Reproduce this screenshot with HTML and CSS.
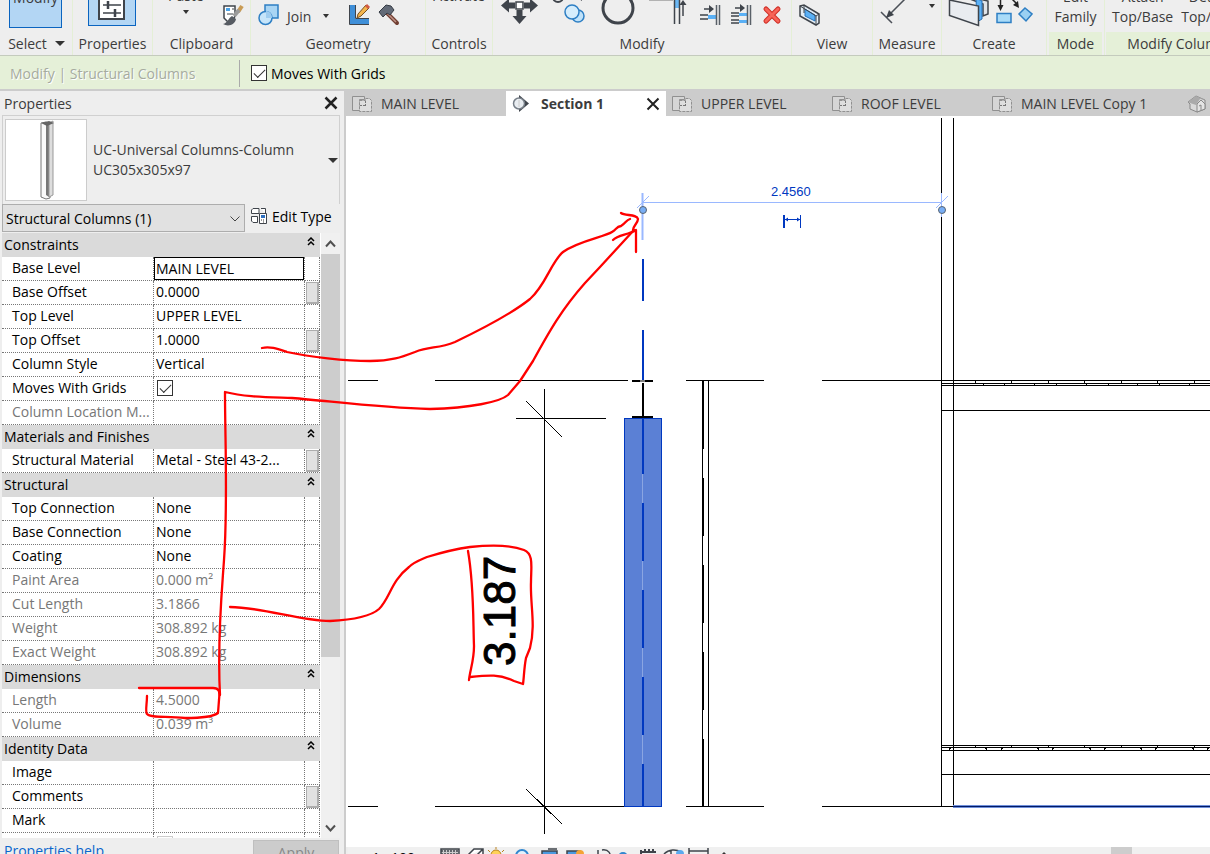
FILE: index.html
```html
<!DOCTYPE html>
<html lang="en">
<head>
<meta charset="utf-8">
<title>Section 1</title>
<link rel="stylesheet" href="styles.css">
</head>
<body>
<div class="app">
  <div class="ribbon">
    <section class="panel panel-select">
      <div class="panel-body"><button class="tool tool-on tool-modify">Modify</button></div>
      <h2 class="panel-title">Select <span class="caret"></span></h2>
    </section>
    <section class="panel panel-properties">
      <div class="panel-body"><button class="tool tool-on tool-props" aria-label="Properties">
        <svg width="30" height="30" viewBox="0 0 30 30"><path d="M2-10h25v34H2z" fill="#fff" stroke="#3f444b" stroke-width="2"/><path d="M7-8h7v12H7z" fill="#4a9ae0" stroke="#444"/><path d="M17-1h6M17 3h6M6 10h18M6 18h18" stroke="#3f444b" stroke-width="1.500"/><path d="M11 6v8M18 14v8" stroke="#3f444b" stroke-width="2.500"/></svg></button></div>
      <h2 class="panel-title">Properties</h2>
    </section>
    <section class="panel panel-clipboard">
      <div class="panel-body">
        <button class="tool tool-text tool-paste">Paste<span class="caret caret-small"></span></button>
        <button class="tool" aria-label="Match type"><svg width="24" height="32" viewBox="220 0 24 32"><path d="M223 6h11v10l-3 6h-4l-4-4z" fill="#fff" stroke="#3f444b" stroke-width="1.500"/><path d="M225 8h4v3h-4z" fill="#4aa3e8"/><path d="M226 14h6M231 9h2" stroke="#3f444b"/><path d="M241 6l-4 6" stroke="#c99b55" stroke-width="4"/><path d="M238 10l-5 6" stroke="#9b9b9b" stroke-width="4"/><path d="M222 24c5-1 5-6 9-8l4 3c-1 6-8 8-13 5z" fill="#565b62"/></svg></button>
      </div>
      <h2 class="panel-title">Clipboard</h2>
    </section>
    <section class="panel panel-geometry">
      <div class="panel-body">
        <button class="tool tool-join"><svg width="24" height="32" viewBox="257 0 24 32"><path d="M265 5h13v13h-13z" fill="#a9d5f4" stroke="#2e7fc4" stroke-width="1.500"/><circle cx="265.500" cy="18" r="6.500" fill="#c6e5fa" stroke="#2e7fc4" stroke-width="1.500"/><path d="M266 11v7h6c0-4-2-7-6-7z" fill="#9fcdf0"/></svg><span>Join</span><span class="caret caret-small"></span></button>
        <button class="tool" aria-label="Wall joins"><svg width="26" height="32" viewBox="345 0 26 32"><path d="M351.500 5v16.500H368" fill="none" stroke="#3f8fd8" stroke-width="5"/><path d="M348.500 5v19.500H368M354.500 5v13.500H368" fill="none" stroke="#3f444b"/><path d="M356 18l1-4 8-9 3 3-8 8z" fill="#f4b54c" stroke="#785020"/><path d="M365 5l3 3" stroke="#d05b45" stroke-width="3"/></svg></button>
        <button class="tool" aria-label="Demolish"><svg width="26" height="32" viewBox="376 0 26 32"><path d="M387 13l10 10" stroke="#713f32" stroke-width="4" stroke-linecap="round"/><path d="M387 13l9 9" stroke="#c09186" stroke-width="1.500"/><path d="M379 12l7-7 5 1 3 4-4 5-3-2-4 4z" fill="#626a77" stroke="#343a43"/></svg></button>
      </div>
      <h2 class="panel-title">Geometry</h2>
    </section>
    <section class="panel panel-controls">
      <div class="panel-body"><button class="tool tool-text tool-activate">Activate</button></div>
      <h2 class="panel-title">Controls</h2>
    </section>
    <section class="panel panel-modify">
      <div class="panel-body">
        <button class="tool" aria-label="Move"><svg width="42" height="32" viewBox="498 0 42 32"><g fill="#3f444b"><path d="M501 5.500l8-7v4h6v6h-6v4zM538 5.500l-8-7v4h-6v6h6v4zM519.500 24l-7-8h4v-6h6v6h4z"/></g><path d="M516 2h7v7h-7z" fill="#fff" stroke="#3f444b" stroke-width="1.500"/></svg></button>
        <button class="tool" aria-label="Copy"><svg width="42" height="32" viewBox="547 0 42 32"><circle cx="558" cy="-3" r="5" fill="none" stroke="#3f444b" stroke-width="2"/><path d="M576-3l6 0v4z" fill="#3f444b"/><circle cx="578" cy="16" r="6" fill="#bfe2fa" stroke="#2e7fc4" stroke-width="1.500"/><circle cx="572" cy="12" r="7" fill="#d5edfc" stroke="#2e7fc4" stroke-width="1.500"/></svg></button>
        <button class="tool" aria-label="Rotate"><svg width="43" height="32" viewBox="596 0 43 32"><circle cx="618" cy="8" r="15" fill="none" stroke="#3f444b" stroke-width="3"/></svg></button>
        <button class="tool" aria-label="Trim"><svg width="44" height="32" viewBox="646 0 44 32"><path d="M649 0h24" stroke="#777" stroke-width="1"/><path d="M674 0h5v8h-5z" fill="#6bb8f5"/><path d="M674.500 0v24M679.500 0v24" stroke="#3f444b" stroke-width="1.500"/><path d="M683 16V4" stroke="#3f444b" stroke-width="1.500"/><path d="M679.500 5l3.500-5 3.500 5z" fill="#3f444b"/></svg></button>
        <button class="tool" aria-label="Align"><svg width="25" height="32" viewBox="697 0 25 32"><path d="M704 9h9M700 15h8M700 19h8" stroke="#3f444b" stroke-width="1.500"/><path d="M709 5l5 4-5 4z" fill="#3f444b"/><path d="M708 15h8v4h-8z" fill="#5ab0f5"/><path d="M716.500 5v20M719.500 5v20" stroke="#596068" stroke-width="1.500"/></svg></button>
        <button class="tool" aria-label="Align multiple"><svg width="24" height="32" viewBox="729 0 24 32"><path d="M735 8h8M731 13h8M731 16h8M731 20h8M731 23h8" stroke="#3f444b" stroke-width="1.300"/><path d="M740 4l5 4-5 4z" fill="#3f444b"/><path d="M739 13h8v3h-8zM739 20h8v3h-8z" fill="#5ab0f5"/><path d="M747.500 5v20M750.500 5v20" stroke="#596068" stroke-width="1.500"/></svg></button>
        <button class="tool" aria-label="Delete"><svg width="24" height="32" viewBox="760 0 24 32"><path d="M766 9l12 12M778 9l-12 12" stroke="#cf2d25" stroke-width="5" stroke-linecap="round"/><path d="M766 9l12 12M778 9l-12 12" stroke="#f76458" stroke-width="3" stroke-linecap="round"/></svg></button>
      </div>
      <h2 class="panel-title">Modify</h2>
    </section>
    <section class="panel panel-view">
      <div class="panel-body"><button class="tool" aria-label="Section box"><svg width="26" height="32" viewBox="796 0 26 32"><path d="M800 6l4-1 15 9v9l-3 2-16-9z" fill="#e4edf5" stroke="#3f444b" stroke-width="1.500"/><path d="M805 9l10 6v6l-10-5z" fill="#5ab0f5" stroke="#2671b8"/><path d="M800 6l16 10 3-2M816 16v8M804 5v8" fill="none" stroke="#3f444b"/></svg></button></div>
      <h2 class="panel-title">View</h2>
    </section>
    <section class="panel panel-measure">
      <div class="panel-body"><button class="tool tool-measure" aria-label="Measure"><svg width="34" height="32" viewBox="876 0 34 32"><path d="M885 18L906-3M880 12l11 11" stroke="#4b5058" stroke-width="1.500"/><path d="M885 18l3-8 5 5z" fill="#3f444b"/></svg><span class="caret caret-small"></span></button></div>
      <h2 class="panel-title">Measure</h2>
    </section>
    <section class="panel panel-create">
      <div class="panel-body">
        <button class="tool" aria-label="Create assembly"><svg width="44" height="32" viewBox="946 0 44 32"><path d="M957-6l31 7v13l-5 2V4z" fill="#dfe3e8" stroke="#3f444b" stroke-width="1.500"/><path d="M976-2l6 3v18l-5 3z" fill="#5ab0f5" stroke="#2671b8"/><path d="M949.500 0l29 6v19.500l-29-10z" fill="#e9ecf0" stroke="#3f444b" stroke-width="1.500"/></svg></button>
        <button class="tool" aria-label="Create group"><svg width="40" height="32" viewBox="994 0 40 32"><path d="M1001.500-2v9M1012-2l5 5" stroke="#222" stroke-width="1.500"/><path d="M998.500 5l3 6 3-6zM1020 8l-1-7-5 4z" fill="#222"/><path d="M998 13.500h14v9h-14z" fill="#a9dbf8" stroke="#2e7fc4" stroke-width="1.500"/><path d="M1026 8l7 6-6 7-7-7z" fill="#9ad0f3" stroke="#2e7fc4" stroke-width="1.500"/></svg></button>
      </div>
      <h2 class="panel-title">Create</h2>
    </section>
    <section class="panel panel-mode">
      <div class="panel-body"><button class="tool tool-lines">Edit<br>Family</button></div>
      <h2 class="panel-title title-context">Mode</h2>
    </section>
    <section class="panel panel-column">
      <div class="panel-body">
        <button class="tool tool-lines">Attach<br>Top/Base</button>
        <button class="tool tool-lines">Detach<br>Top/Base</button>
      </div>
      <h2 class="panel-title title-context">Modify Column</h2>
    </section>
  </div>

  <div class="options">
    <span class="context-name">Modify | Structural Columns</span>
    <label class="option"><input type="checkbox" class="check" checked>Moves With Grids</label>
  </div>

  <div class="workspace">
    <aside class="palette">
      <header class="palette-head"><h1 class="palette-title">Properties</h1>
        <button class="close" aria-label="Close"><svg width="14" height="14" viewBox="0 0 14 14"><path d="M1.500 1.500l11 11M12.500 1.500l-11 11" stroke="#222" stroke-width="2.500"/></svg></button></header>
      <button class="type-box">
        <span class="thumb"><svg width="80" height="80" viewBox="0 0 80 80"><path d="M35 3l5-1 4 2v74l-4 1-5-2z" fill="#fafafa" stroke="#777"/><path d="M40 4l3-1v74l-3-2z" fill="#777"/><path d="M43 3l4-2v74l-4 2z" fill="#ddd" stroke="#999"/><path d="M35 3l6 3 7-3-5-2z" fill="#666"/></svg></span>
        <span class="type-name">UC-Universal Columns-Column<br>UC305x305x97</span>
        <span class="caret"></span>
      </button>
      <div class="filter-row">
        <span class="filter-wrap"><select class="filter" aria-label="Category"><option>Structural Columns (1)</option></select>
        <svg class="filter-arrow" width="10" height="6" viewBox="0 0 10 6"><path d="M.5.500L5 5 9.500.500" fill="none" stroke="#444"/></svg></span>
        <button class="edit-type"><svg width="18" height="18" viewBox="0 0 18 18"><path d="M3 1.500h6v5H1.500V3zM11 1.500h4.500v5M1.500 9.500h6v6H3L1.500 14z" fill="#fff" stroke="#3f444b"/><path d="M9.500 6.500h7v10h-7z" fill="#fff" stroke="#3f444b"/><path d="M11 8h4v3h-4z" fill="#2d6fc0"/><path d="M11 13h1M13 13h1M13 15h1" stroke="#333"/></svg>Edit Type</button>
      </div>
      <div class="grid-wrap">
        <table class="props">
          <colgroup><col class="col-name"><col class="col-value"><col class="col-more"></colgroup>
          <tbody>
          <tr class="group"><th colspan="2">Constraints</th><td><button class="fold" aria-label="Collapse"><svg width="8" height="9" viewBox="0 0 8 9"><path d="M1 4l3-3 3 3M1 8l3-3 3 3" fill="none" stroke="#000" stroke-width="1.500"/></svg></button></td></tr>
          <tr><th>Base Level</th><td class="focus"><input class="value" aria-label="Base Level" value="MAIN LEVEL"></td><td></td></tr>
          <tr><th>Base Offset</th><td><input class="value" aria-label="Base Offset" value="0.0000"></td><td><button class="more" aria-label="Associate"></button></td></tr>
          <tr><th>Top Level</th><td><input class="value" aria-label="Top Level" value="UPPER LEVEL"></td><td></td></tr>
          <tr><th>Top Offset</th><td><input class="value" aria-label="Top Offset" value="1.0000"></td><td><button class="more" aria-label="Associate"></button></td></tr>
          <tr><th>Column Style</th><td><input class="value" aria-label="Column Style" value="Vertical"></td><td></td></tr>
          <tr><th><label for="grids">Moves With Grids</label></th><td><input type="checkbox" id="grids" class="check" checked></td><td></td></tr>
          <tr class="readonly"><th>Column Location M...</th><td></td><td></td></tr>
          <tr class="group"><th colspan="2">Materials and Finishes</th><td><button class="fold" aria-label="Collapse"><svg width="8" height="9" viewBox="0 0 8 9"><path d="M1 4l3-3 3 3M1 8l3-3 3 3" fill="none" stroke="#000" stroke-width="1.500"/></svg></button></td></tr>
          <tr><th>Structural Material</th><td><input class="value" aria-label="Structural Material" value="Metal - Steel 43-2..."></td><td><button class="more" aria-label="Associate"></button></td></tr>
          <tr class="group"><th colspan="2">Structural</th><td><button class="fold" aria-label="Collapse"><svg width="8" height="9" viewBox="0 0 8 9"><path d="M1 4l3-3 3 3M1 8l3-3 3 3" fill="none" stroke="#000" stroke-width="1.500"/></svg></button></td></tr>
          <tr><th>Top Connection</th><td><input class="value" aria-label="Top Connection" value="None"></td><td></td></tr>
          <tr><th>Base Connection</th><td><input class="value" aria-label="Base Connection" value="None"></td><td></td></tr>
          <tr><th>Coating</th><td><input class="value" aria-label="Coating" value="None"></td><td></td></tr>
          <tr class="readonly"><th>Paint Area</th><td>0.000 m²</td><td></td></tr>
          <tr class="readonly"><th>Cut Length</th><td>3.1866</td><td></td></tr>
          <tr class="readonly"><th>Weight</th><td>308.892 kg</td><td></td></tr>
          <tr class="readonly"><th>Exact Weight</th><td>308.892 kg</td><td></td></tr>
          <tr class="group"><th colspan="2">Dimensions</th><td><button class="fold" aria-label="Collapse"><svg width="8" height="9" viewBox="0 0 8 9"><path d="M1 4l3-3 3 3M1 8l3-3 3 3" fill="none" stroke="#000" stroke-width="1.500"/></svg></button></td></tr>
          <tr class="readonly"><th>Length</th><td>4.5000</td><td></td></tr>
          <tr class="readonly"><th>Volume</th><td>0.039 m³</td><td></td></tr>
          <tr class="group"><th colspan="2">Identity Data</th><td><button class="fold" aria-label="Collapse"><svg width="8" height="9" viewBox="0 0 8 9"><path d="M1 4l3-3 3 3M1 8l3-3 3 3" fill="none" stroke="#000" stroke-width="1.500"/></svg></button></td></tr>
          <tr><th>Image</th><td><input class="value" aria-label="Image"></td><td></td></tr>
          <tr><th>Comments</th><td><input class="value" aria-label="Comments"></td><td><button class="more" aria-label="Associate"></button></td></tr>
          <tr><th>Mark</th><td><input class="value" aria-label="Mark"></td><td></td></tr>
          <tr class="readonly"><th></th><td><input type="checkbox" class="check check-off" aria-label="Option" disabled></td><td></td></tr>
          </tbody>
        </table>
        <div class="scroll">
          <button class="scroll-btn" aria-label="Scroll up"><svg width="11" height="8" viewBox="0 0 11 8"><path d="M1 6.500l4.500-5 4.500 5" fill="none" stroke="#505050" stroke-width="2"/></svg></button>
          <div class="scroll-track"><div class="scroll-thumb"></div></div>
          <button class="scroll-btn" aria-label="Scroll down"><svg width="11" height="8" viewBox="0 0 11 8"><path d="M1 1.500l4.500 5 4.500-5" fill="none" stroke="#505050" stroke-width="2"/></svg></button>
        </div>
      </div>
      <footer class="palette-foot"><a class="help" href="#">Properties help</a><button class="apply" disabled>Apply</button></footer>
    </aside>

    <main class="views">
      <nav class="tabs">
        <button class="tab"><svg width="22" height="18" viewBox="0 0 22 18"><path d="M.5 1.500h12v3h-5v8h5v3H.500z" fill="#d6d6d6" stroke="#909090"/><path d="M7.500 5.500h6v-2h4l2 2v11h-12z" fill="#dedede" stroke="#909090" stroke-dasharray="3 1"/><path d="M8 10.500h6M13.500 6v6" stroke="#777" stroke-dasharray="2 1"/></svg>MAIN LEVEL</button>
        <div class="tab tab-active"><svg width="22" height="18" viewBox="0 0 22 18"><path d="M7 0l10 8.500L7 17z" fill="#3f444b"/><circle cx="7" cy="8.500" r="5.500" fill="#e9edf1" stroke="#777f88" stroke-width="1.500"/><path d="M7 5v7" stroke="#ccc"/></svg>Section 1
          <button class="close" aria-label="Close Section 1"><svg width="14" height="14" viewBox="0 0 14 14"><path d="M1.500 1.500l11 11M12.500 1.500l-11 11" stroke="#222" stroke-width="2"/></svg></button></div>
        <button class="tab"><svg width="22" height="18" viewBox="0 0 22 18"><path d="M.5 1.500h12v3h-5v8h5v3H.500z" fill="#d6d6d6" stroke="#909090"/><path d="M7.500 5.500h6v-2h4l2 2v11h-12z" fill="#dedede" stroke="#909090" stroke-dasharray="3 1"/><path d="M8 10.500h6M13.500 6v6" stroke="#777" stroke-dasharray="2 1"/></svg>UPPER LEVEL</button>
        <button class="tab"><svg width="22" height="18" viewBox="0 0 22 18"><path d="M.5 1.500h12v3h-5v8h5v3H.500z" fill="#d6d6d6" stroke="#909090"/><path d="M7.500 5.500h6v-2h4l2 2v11h-12z" fill="#dedede" stroke="#909090" stroke-dasharray="3 1"/><path d="M8 10.500h6M13.500 6v6" stroke="#777" stroke-dasharray="2 1"/></svg>ROOF LEVEL</button>
        <button class="tab tab-wide"><svg width="22" height="18" viewBox="0 0 22 18"><path d="M.5 1.500h12v3h-5v8h5v3H.500z" fill="#d6d6d6" stroke="#909090"/><path d="M7.500 5.500h6v-2h4l2 2v11h-12z" fill="#dedede" stroke="#909090" stroke-dasharray="3 1"/><path d="M8 10.500h6M13.500 6v6" stroke="#777" stroke-dasharray="2 1"/></svg>MAIN LEVEL Copy 1</button>
        <button class="tab" aria-label="3D view"><svg width="22" height="18" viewBox="0 0 22 18"><path d="M1 7l8-6 9 4v9l-8 3-7-3V9z" fill="#dadada" stroke="#888"/><path d="M1 7l8-6 9 4-5-1-4 6-6-2z" fill="#aaa"/><path d="M10 9l4-4 4 4v5l-8 3z" fill="#e4e4e4" stroke="#888"/><path d="M12 11l2-1v5" fill="none" stroke="#888"/></svg></button>
      </nav>
      <div class="canvas">
        <svg class="drawing" width="864" height="731" viewBox="346 116 864 731" role="img" aria-label="Section drawing">
          <g fill="none" stroke="#000" shape-rendering="crispEdges">
            <path d="M941.500 118V806M953.500 118V806"/>
            <path d="M348 380.500h30M435 380.500h193M686 380.500h78M822 380.500h2000M941 383.500h1900M941 385.500h1900M941 410.500h1900"/>
            <path d="M975.500 380v4M1011.500 380v4M1048.500 380v4M1084.500 380v4M1121.500 380v4M1157.500 380v4M1194.500 380v4M983.500 383v3M1004.500 383v3M1034.500 383v3M1056.500 383v3M1086.500 383v3M1108.500 383v3M1137.500 383v3M1159.500 383v3M1189.500 383v3"/>
            <path d="M941 745.500h1900M941 747.500h1900M941 750.500h1900M941 774.500h1900"/>
            <path d="M975.500 745v3M1011.500 745v3M1048.500 745v3M1084.500 745v3M1121.500 745v3M1157.500 745v3M1194.500 745v3M949 750l2-3M985 747l2 3M1001 750l2-3M1037 747l2 3M1052 750l2-3M1089 747l2 3M1104 750l2-3M1140 747l2 3M1155 750l2-3M1192 747l2 3M1207 750l2-3"/>
            <path d="M348 806.500h30M435 806.500h193M686 806.500h78M822 806.500h132"/>
            <path d="M544.500 389v445M516 418.500h90"/>
            <path d="M526 401l36 36M526 789l36 35"/>
            <path d="M702.500 380v426M708.500 380v426"/>
            <path d="M703 380v69M703 478v58M703 565v58M703 652v58M703 739v67" stroke-width="2"/>
            <path d="M632 381h21M643 383v34M632 417h21" stroke-width="2"/>
          </g>
          <path d="M640 381h5" stroke="#fff"/>
          <path d="M953 806.500h1900" stroke="#6f8fdb" stroke-width="3" shape-rendering="crispEdges"/>
          <path d="M953 806.500h1900" stroke="#001a66" shape-rendering="crispEdges"/>
          <rect x="624.500" y="418.500" width="37" height="388" fill="#5b80d5" stroke="#0038c0" shape-rendering="crispEdges"/>
          <path d="M642.500 474v29M642.500 561v29M642.500 648v29M642.500 735v29" stroke="#8aa5e2"/>
          <path d="M643 259v42M643 330v50M643 419v55M643 503v58M643 590v58M643 677v58M643 764v42" stroke="#0038c0" stroke-width="2" shape-rendering="crispEdges"/>
          <g stroke="#9ab8ff" fill="none"><path d="M642.500 193v47" stroke-width="2"/><path d="M941.500 193v24M643 202.500h299"/><path d="M637 208l12-12M936 208l12-12"/></g>
          <g fill="#78aef5" stroke="#5a6470"><circle cx="643" cy="210" r="3.500"/><circle cx="942" cy="210" r="3.500"/></g>
          <path d="M784 215v13" stroke="#0038c0" stroke-width="2"/><path d="M800.500 215v13M785 219.500h16" stroke="#0038c0" fill="none" shape-rendering="crispEdges"/><path d="M785 219.500l3-2v4zM800 219.500l-3-2v4z" fill="#0038c0"/>
          <text class="temp-dim" x="771" y="196">2.4560</text>
          <text class="main-dim" transform="translate(515 666) rotate(-90)">3.187</text>
        </svg>
      </div>
      <div class="viewbar">
        <span class="scale">1 : 100</span>
        <svg class="view-icons" width="310" height="24" viewBox="438 847 310 24"><g fill="none" stroke="#3f444b" stroke-width="1.500"><path d="M441 849h18v16h-18z" fill="#ccc"/><path d="M441 851h18M441 854h18" stroke-dasharray="2 1"/><path d="M466 857l8-8h9v12M466 857h9l8-8" fill="#fff"/><path d="M542 851h15v12h-15z" fill="#4a9ae0"/><path d="M548 849h9"/><path d="M567 851h13v12h-13z" fill="#4a9ae0"/><path d="M598 850v5M602 850c7-1 9 4 8 8"/><path d="M640 852h16M641 850v4M645 849v4M649 849v4M653 849v4" stroke-width="2"/><path d="M664 854c5-5 12-5 17-2M671 850v6"/><path d="M689 851h19M689 848v8M708 848v8"/></g><circle cx="496" cy="855" r="5" fill="#ffd258" stroke="#b9811e"/><path d="M496 847v2M488 850l2 2M504 850l-2 2" stroke="#b9811e"/><g fill="#e3f2fc" stroke="#3287cf" stroke-width="2"><circle cx="522" cy="856" r="6"/><circle cx="623" cy="857" r="4"/></g><circle cx="580" cy="854" r="4" fill="#f4a335"/><circle cx="680" cy="854" r="4" fill="#5aa9ee"/><path d="M721 855l3-3 3 3z" fill="#333"/></svg>
        <div class="hscroll"><div class="hthumb"></div></div>
      </div>
    </main>
  </div>

  <svg class="markup" width="1210" height="854" viewBox="0 0 1210 854" aria-hidden="true">
    <g fill="none" stroke="#f00" stroke-width="2.300" stroke-linecap="round" stroke-linejoin="round">
      <path d="M262 348C270 346 278 349 287 352C310 357 345 361 370 361C392 361 402 357 415 352C430 346 438 349 455 342C480 330 510 315 530 299C546 285 551 262 563 252C578 241 604 237 612 232C617 229 616 227 621 226C626 223 626 220 630 219"/>
      <path d="M621 213C625 216 637 214 638 219C638 223 633 226 633 230M613 240C618 235 628 235 636 230V252"/>
      <path d="M220 695C217 640 222 590 224 560C228 505 225 440 225 392C245 397 265 397 292 398C330 401 380 408 430 409C470 408 500 402 508 395L520 381L533 361C550 330 562 309 585 283L600 267L634 230"/>
      <path d="M230 607C262 607 300 621 330 621C350 620 370 617 379 609C390 598 391 581 409 567C414 562 420 560 427 557C440 553 455 549 470 547C490 545 511 545 524 550C534 554 531 567 531 582C530 604 536 625 530 648L526 658C524 668 524 678 523 684L514 681C500 674 489 675 470 677"/>
      <path d="M468 551C474 585 473 620 474 646C474 661 470 670 469 680"/>
      <path d="M139 688L213 688C219 688 220 691 219 700L218 713C213 717 201 718 185 718C165 716 151 718 147 714C145 712 147 704 147 696"/>
    </g>
  </svg>
</div>
</body>
</html>
```

FILE: styles.css
```css
* { box-sizing: border-box; }
body { margin: 0; font-family: "Open Sans", "Noto Sans", sans-serif; font-size: 14px; color: #3c3c3c; }
button, input, select { font: inherit; color: inherit; margin: 0; padding: 0; border: 0; background: none; }
svg { flex: none; }
.app { position: relative; display: flex; flex-direction: column; height: 100vh; overflow: hidden; background: #eee; }

.ribbon { display: flex; flex: none; height: 56px; padding-left: 1px; overflow: hidden; border-bottom: 1px solid #c4cbbd; }
.panel { display: flex; flex: none; flex-direction: column; border-right: 1px solid #e4efd6; }
.panel-body { display: flex; align-items: flex-end; height: 32px; overflow: hidden; }
.panel-title { display: flex; align-items: center; justify-content: center; gap: 8px; height: 23px; margin: 0; font-size: 14px; font-weight: 400; white-space: nowrap; }
.tool { display: flex; flex: none; align-items: flex-end; }
.tool-on { height: 76px; background: #b3d6f4; border: 1px solid #0a64c0; }
.tool-modify { justify-content: center; width: 53px; margin: 0 0 4px 8px; padding-bottom: 20px; }
.tool-props { justify-content: center; width: 48px; margin: 0 0 6px 15px; }
.tool-text { flex-direction: column; align-items: center; line-height: 20px; }
.tool-paste { gap: 4px; padding-bottom: 18px; }
.tool-activate { padding-bottom: 26px; }
.tool-join { align-items: center; gap: 6px; padding-right: 13px; }
.tool-join .caret { margin-left: 6px; }
.tool-measure { align-items: center; gap: 18px; }
.tool-measure .caret { margin-bottom: 20px; }
.tool-lines { display: block; line-height: 20px; padding-bottom: 5px; text-align: center; }
.caret { flex: none; width: 0; height: 0; border: 5px solid transparent; border-top-color: #333; border-bottom: 0; }
.caret-small { border-width: 3px; border-top-width: 4px; border-bottom: 0; }
.panel-select { width: 72px; }
.panel-properties { width: 80px; }
.panel-clipboard { width: 98px; }
.panel-clipboard .panel-body { gap: 17px; padding-left: 15px; }
.panel-geometry { width: 175px; }
.panel-geometry .panel-body { gap: 4px; padding-left: 6px; }
.panel-controls { width: 67px; }
.panel-controls .panel-body { justify-content: center; }
.panel-modify { width: 299px; }
.panel-modify .panel-body { gap: 7px; padding-left: 5px; }
.panel-view { width: 81px; }
.panel-view .panel-body { padding-left: 4px; }
.panel-measure { width: 69px; }
.panel-measure .panel-body { padding-left: 4px; }
.panel-create { width: 105px; }
.panel-create .panel-body { gap: 3px; padding-left: 4px; }
.panel-mode { width: 58px; padding: 0 2px; }
.panel-mode .panel-body { justify-content: center; }
.panel-column { flex: 1 0 144px; padding-left: 1px; }
.panel-column .panel-body { gap: 8px; padding-left: 6px; }
.title-context { background: #e5f0d8; }

.options { display: flex; flex: none; align-items: center; height: 33px; padding-top: 1px; background: #e5f0d8; }
.context-name { width: 240px; padding: 4px 10px; border-right: 1px solid #aaa; color: #a6aba0; text-shadow: 1px 1px #fff; }
.option { display: flex; align-items: center; gap: 4px; padding-left: 11px; color: #000; }
.check { appearance: none; display: block; width: 16px; height: 16px; background: #fff; border: 1px solid #333; }
.check:checked::before { content: ""; display: block; width: 10px; height: 5px; margin: 3px 2px; border: solid #333; border-width: 0 0 1px 1px; rotate: -45deg; }
.check-off { border-color: #ccc; }

.workspace { display: flex; flex: 1; min-height: 0; border-top: 2px solid #ccc; }
.palette { display: flex; flex: none; flex-direction: column; width: 346px; padding: 0 4px 0 2px; border-right: 2px solid #ccc; }
.palette-head { display: flex; flex: none; align-items: center; justify-content: space-between; height: 24px; padding: 0 2px; }
.palette-title { margin: 0; font-size: 14px; font-weight: 400; }
.close { display: flex; }
.type-box { display: flex; flex: none; align-items: center; height: 89px; padding-left: 2px; border: 1px solid #d0d0d0; border-bottom: 0; text-align: left; line-height: 20px; }
.thumb { width: 82px; height: 82px; border: 1px solid #ccc; background: #fff; }
.type-name { flex: 1; padding-left: 6px; white-space: nowrap; }
.type-box .caret { margin-right: 1px; }
.filter-row { display: flex; flex: none; gap: 5px; height: 28px; color: #000; }
.filter-wrap { position: relative; display: flex; width: 243px; }
.filter { appearance: none; width: 100%; padding: 0 3px; background: #e1e1e1; border: 1px solid #adadad; }
.filter-arrow { position: absolute; right: 5px; top: 12px; }
.edit-type { display: flex; align-items: center; gap: 4px; height: 24px; white-space: nowrap; }
.grid-wrap { display: flex; flex: 1; min-height: 0; overflow: hidden; margin-top: 1px; background: #fff; color: #000; }
.props { flex: none; align-self: flex-start; width: 318px; table-layout: fixed; border-spacing: 0; border-collapse: separate; }
.col-name { width: 152px; }
.col-value { width: 151px; }
.col-more { width: 15px; }
.props tr { height: 24px; }
.props th, .props td { height: 24px; padding: 0 0 2px 2px; border: dotted #777; border-width: 0 1px 1px 0; font-weight: 400; line-height: 20px; text-align: left; white-space: nowrap; overflow: hidden; }
.props th { padding-left: 10px; }
.props .group th, .props .group td { padding: 0 0 0 2px; background: #dadada; border-color: #dadada; }
.props .group td { padding: 0; }
.fold { display: block; padding: 0 0 6px 1px; line-height: 0; }
.readonly { color: #777; }
.value { display: block; width: 100%; height: 20px; }
.props .focus { padding: 0; }
.focus .value { height: 23px; padding: 0 0 1px 1px; border: 1px solid #000; }
.props .check { margin-left: 1px; }
.props td:last-child { padding: 0 0 0 1px; }
.more { display: block; width: 13px; height: 22px; background: #e1e1e1; border: 1px solid #adadad; border-width: 1px 2px 2px 1px; }
.scroll { display: flex; flex: 1; flex-direction: column; margin-left: 1px; background: #f0f0f0; }
.scroll-btn { display: flex; flex: none; align-items: center; justify-content: center; height: 21px; }
.scroll-track { flex: 1; }
.scroll-thumb { height: 71.5%; background: #cdcdcd; }
.palette-foot { display: flex; flex: none; justify-content: space-between; height: 16px; padding: 2px 1px 0 2px; overflow: hidden; line-height: 22px; }
.help { color: #0a66cc; text-decoration: none; }
.apply { width: 86px; height: 26px; background: #ccc; border: 1px solid #bfbfbf; color: #888; }

.views { display: flex; flex: 1; flex-direction: column; min-width: 0; }
.tabs { display: flex; flex: none; height: 25px; overflow: hidden; background: #ccc; }
.tab { display: flex; flex: none; align-items: center; gap: 7px; width: 160px; padding-left: 6px; white-space: nowrap; }
.tab-active { padding-right: 6px; background: #fff; font-weight: 700; }
.tab-active .close { margin-left: auto; }
.tab-wide { width: 195px; }
.canvas { flex: 1; min-height: 0; overflow: hidden; background: #fff; }
.drawing { display: block; overflow: visible; }
.temp-dim { font: 13px "Liberation Sans", Arial, sans-serif; fill: #0038c0; }
.main-dim { font: 44px "Liberation Sans", Arial, sans-serif; fill: #000; stroke: #000; stroke-width: 1px; }
.viewbar { display: flex; flex: none; height: 7px; margin-left: 2px; overflow: hidden; background: #f0f0f0; color: #000; line-height: 22px; }
.scale { width: 90px; padding-left: 24px; white-space: nowrap; }
.hscroll { flex: 1; display: flex; justify-content: flex-end; padding-right: 78px; }
.hthumb { width: 21px; background: #cdcdcd; }
.markup { position: absolute; left: 0; top: 0; pointer-events: none; }
```
